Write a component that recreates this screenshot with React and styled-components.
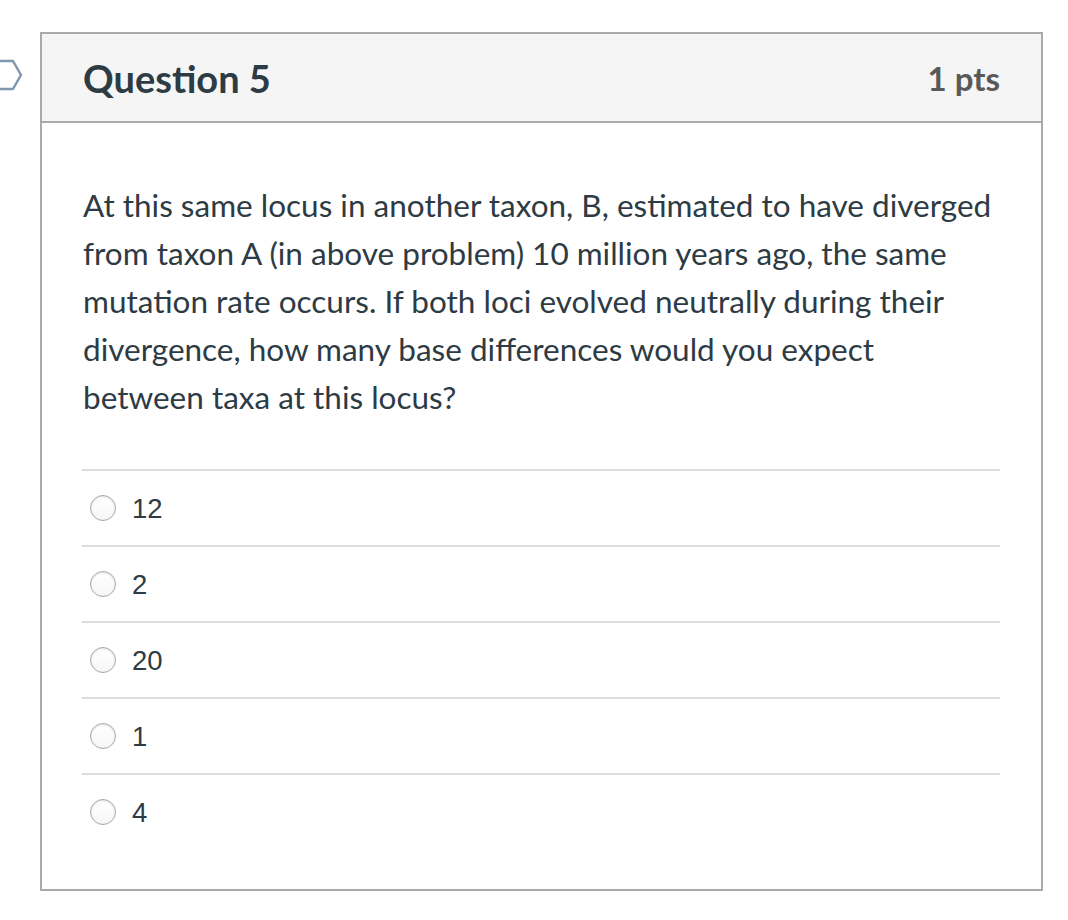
import React from "react";
import styled, { createGlobalStyle } from "styled-components";

const Global = createGlobalStyle`
  html, body { margin: 0; padding: 0; background: #fff; }
  body { font-family: Lato, "Open Sans", sans-serif; }
`;

const Page = styled.div`
  padding: 32px 25px 0 40px;
`;

const Card = styled.div`
  position: relative;
  width: 999px;
  border: 2px solid #aaaaaa;
  background: #fff;
`;

const Flag = styled.svg`
  position: absolute;
  left: -42px;
  top: 24px;
  width: 30px;
  height: 36px;
  overflow: visible;
`;

const Header = styled.div`
  display: flex;
  justify-content: space-between;
  align-items: center;
  height: 87px;
  padding: 0 41px;
  background: #f5f5f5;
  border-bottom: 2px solid #aaaaaa;
`;

const Title = styled.h2`
  margin: 0;
  font-family: Lato, sans-serif;
  font-weight: 700;
  font-size: 38px;
  color: #2d3b45;
`;

const Points = styled.div`
  font-family: Lato, sans-serif;
  font-weight: 700;
  font-size: 33px;
  color: #595959;
`;

const Body = styled.div`
  padding: 58px 41px 40px 40px;
`;

const Text = styled.p`
  margin: 0 0 48px 0;
  font-family: Lato, sans-serif;
  font-size: 31.5px;
  line-height: 48px;
  color: #2d3b45;
  padding-left: 1px;
  white-space: nowrap;
`;

const Answers = styled.div`
  display: flex;
  flex-direction: column;
`;

const Answer = styled.label`
  display: flex;
  align-items: center;
  gap: 16px;
  height: 74px;
  padding-left: 8px;
  border-top: 2px solid #dddddd;
  cursor: pointer;
`;

const Radio = styled.span`
  display: block;
  width: 26px;
  height: 26px;
  border-radius: 50%;
  box-sizing: border-box;
  border: 1px solid #a9a9a9;
  background: linear-gradient(#ffffff, #f6f6f6);
  box-shadow: inset 0 1px 2px rgba(0, 0, 0, 0.12);
  flex: none;
`;

const AnswerText = styled.span`
  font-family: "Liberation Sans", Arial, sans-serif;
  font-size: 27.5px;
  color: #2d3b45;
  padding-top: 1px;
`;

const answers = ["12", "2", "20", "1", "4"];

export default function App() {
  return (
    <>
      <Global />
      <Page>
        <Card>
          <Flag viewBox="0 0 30 36">
            <path
              d="M-6 3 H13 L21 17 L13 31 H-6"
              fill="none"
              stroke="#7f98b0"
              strokeWidth="2.5"
              strokeLinejoin="round"
            />
          </Flag>
          <Header>
            <Title>Question 5</Title>
            <Points>1 pts</Points>
          </Header>
          <Body>
            <Text>
              At this same locus in another taxon, B, estimated to have diverged
              <br />
              from taxon A (in above problem) 10 million years ago, the same
              <br />
              mutation rate occurs. If both loci evolved neutrally during their
              <br />
              divergence, how many base differences would you expect
              <br />
              between taxa at this locus?
            </Text>
            <Answers>
              {answers.map((a) => (
                <Answer key={a}>
                  <Radio />
                  <AnswerText>{a}</AnswerText>
                </Answer>
              ))}
            </Answers>
          </Body>
        </Card>
      </Page>
    </>
  );
}
